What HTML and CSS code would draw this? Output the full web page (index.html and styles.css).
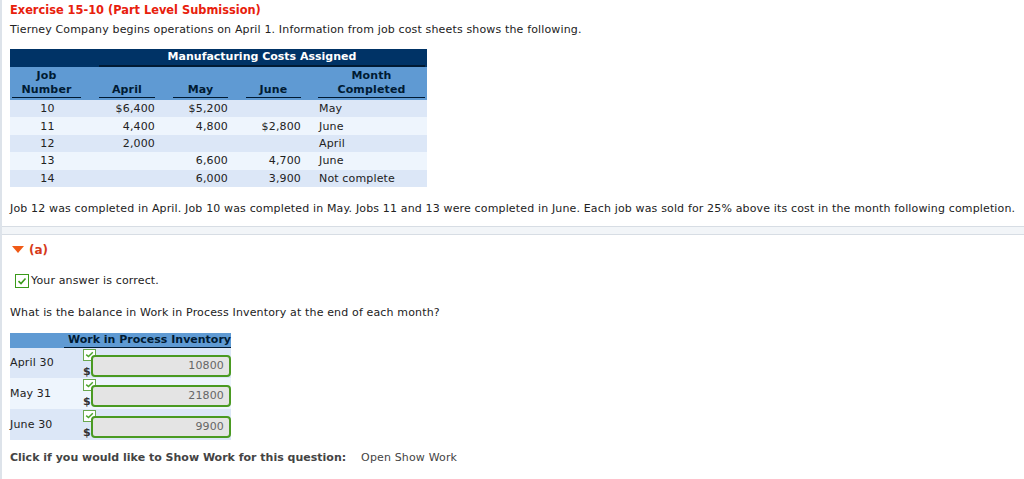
FILE: index.html
```html
<!DOCTYPE html>
<html>
<head>
<meta charset="utf-8">
<link rel="stylesheet" href="styles.css">
</head>
<body>
<div class="page">
  <section class="box top">
    <h1 class="title">Exercise 15-10 (Part Level Submission)</h1>
    <p class="intro">Tierney Company begins operations on April 1. Information from job cost sheets shows the following.</p>
    <table class="costs">
      <colgroup><col class="w-job"><col class="w-num"><col class="w-num2"><col class="w-num2"><col class="w-mon"></colgroup>
      <thead>
        <tr class="hd1">
          <th></th>
          <th colspan="4"><span class="u1">Manufacturing Costs Assigned</span></th>
        </tr>
        <tr class="hd2">
          <th class="c-job"><span class="u">Job<br>Number</span></th>
          <th class="c-num"><span class="u">April</span></th>
          <th class="c-num"><span class="u">May</span></th>
          <th class="c-num"><span class="u">June</span></th>
          <th class="c-mon"><span class="u">Month<br>Completed</span></th>
        </tr>
      </thead>
      <tbody>
        <tr class="odd"><td class="job">10</td><td class="n">$6,400</td><td class="n">$5,200</td><td class="n"></td><td class="m">May</td></tr>
        <tr class="even"><td class="job">11</td><td class="n">4,400</td><td class="n">4,800</td><td class="n">$2,800</td><td class="m">June</td></tr>
        <tr class="odd"><td class="job">12</td><td class="n">2,000</td><td class="n"></td><td class="n"></td><td class="m">April</td></tr>
        <tr class="even"><td class="job">13</td><td class="n"></td><td class="n">6,600</td><td class="n">4,700</td><td class="m">June</td></tr>
        <tr class="odd"><td class="job">14</td><td class="n"></td><td class="n">6,000</td><td class="n">3,900</td><td class="m">Not complete</td></tr>
      </tbody>
    </table>
    <p class="note">Job 12 was completed in April. Job 10 was completed in May. Jobs 11 and 13 were completed in June. Each job was sold for 25% above its cost in the month following completion.</p>
  </section>
  <div class="band"></div>
  <section class="box bottom">
    <div class="part"><span class="tri"></span>(a)</div>
    <div class="correct"><span class="cbox"><svg width="10" height="8" viewBox="0 0 10 8"><path d="M1.5 4.2 L4 6.5 L8.5 1.5" fill="none" stroke="#3a9a1a" stroke-width="1.6"/></svg></span>Your answer is correct.</div>
    <p class="question">What is the balance in Work in Process Inventory at the end of each month?</p>
    <table class="wip">
      <colgroup><col class="w-lbl"><col class="w-val"></colgroup>
      <tr class="whd"><th></th><th><span class="wu">Work in Process Inventory</span></th></tr>
      <tr class="odd r1"><td class="lbl">April 30</td><td class="cell"><div class="inwrap"><span class="mini"><svg width="9" height="7" viewBox="0 0 9 7"><path d="M1.2 3.6 L3.5 5.6 L7.8 1.2" fill="none" stroke="#4aa52a" stroke-width="1.4"/></svg></span><span class="dollar">$</span><span class="inp">10800</span></div></td></tr>
      <tr class="even r2"><td class="lbl">May 31</td><td class="cell"><div class="inwrap"><span class="mini"><svg width="9" height="7" viewBox="0 0 9 7"><path d="M1.2 3.6 L3.5 5.6 L7.8 1.2" fill="none" stroke="#4aa52a" stroke-width="1.4"/></svg></span><span class="dollar">$</span><span class="inp">21800</span></div></td></tr>
      <tr class="odd r2"><td class="lbl">June 30</td><td class="cell"><div class="inwrap"><span class="mini"><svg width="9" height="7" viewBox="0 0 9 7"><path d="M1.2 3.6 L3.5 5.6 L7.8 1.2" fill="none" stroke="#4aa52a" stroke-width="1.4"/></svg></span><span class="dollar">$</span><span class="inp">9900</span></div></td></tr>
    </table>
    <div class="showwork"><span class="sw-b">Click if you would like to Show Work for this question:</span><span class="sw-l">Open Show Work</span></div>
  </section>
</div>
</body>
</html>
```
FILE: styles.css
```css
html, body {
  margin: 0;
  padding: 0;
  background: #fff;
}
body {
  font-family: "DejaVu Sans", Verdana, sans-serif;
  font-size: 11px;
  letter-spacing: 0.15px;
  color: #222;
}
.page {
  border-left: 2px solid #dde3ea;
  min-height: 479px;
}
.box {
  padding: 0 8px;
}
.top {
  padding-top: 3px;
  padding-bottom: 10px;
  border-bottom: 1px solid #d7dde4;
}
.band {
  height: 7px;
  background: #f2f5f8;
}
.bottom {
  border-top: 1px solid #d7dde4;
  padding-top: 8px;
}
.title {
  margin: 0;
  font-size: 11.4px;
  font-weight: bold;
  color: #e8200c;
  line-height: 15px;
  letter-spacing: 0;
}
.intro {
  margin: 5px 0 13px;
  line-height: 13px;
}
.costs {
  border-collapse: collapse;
  width: 417px;
  table-layout: fixed;
  font-size: 11px;
}
.w-job { width: 73px; }
.w-num { width: 74px; }
.w-num2 { width: 73px; }
.w-mon { width: 124px; }
.costs th, .costs td {
  padding: 0;
}
.hd1 th {
  background: #003366;
  color: #fff;
  height: 18px;
  padding: 0 2px 0 0;
  text-align: center;
  letter-spacing: 0;
}
.u1 {
  display: block;
  border-bottom: 2px solid #001a33;
  margin-left: 16px;
  line-height: 16px;
}
.hd2 th {
  background: #5f9ad3;
  color: #001a33;
  vertical-align: bottom;
  height: 29px;
  padding: 2px 2px 2px 0;
  line-height: 14px;
}
.u {
  display: block;
  border-bottom: 1px solid #001a33;
  text-align: center;
}
.c-job .u { margin-left: 2px; }
.c-num .u { margin-left: 16px; }
.c-mon .u { margin-left: 15px; }
.costs tbody td {
  height: 17.4px;
  line-height: 17px;
}
.odd { background: #dce7f7; }
.even { background: #eef5fd; }
.job { text-align: center; padding-left: 2px !important; }
.n { text-align: right; padding-right: 2px !important; }
.m { padding-left: 16px !important; }
.note {
  margin: 15px 0 0;
  line-height: 14px;
  white-space: nowrap;
}
.part {
  display: flex;
  align-items: center;
  color: #d63a1a;
  font-weight: bold;
  font-size: 12px;
  line-height: 14px;
  margin-left: 2px;
  letter-spacing: 0;
}
.tri {
  width: 0;
  height: 0;
  border-left: 6px solid transparent;
  border-right: 6px solid transparent;
  border-top: 7px solid #f05a16;
  margin-right: 5px;
}
.correct {
  display: flex;
  align-items: center;
  margin-top: 17px;
  line-height: 14px;
}
.cbox {
  width: 12px;
  height: 12px;
  border: 1px solid #3a9a1a;
  display: inline-flex;
  align-items: center;
  justify-content: center;
  margin: 0 2px 0 5px;
  background: #fff;
}
.question {
  margin: 18px 0 13px;
  line-height: 14px;
}
.wip {
  border-collapse: collapse;
  table-layout: fixed;
  width: 221px;
}
.w-lbl { width: 54px; }
.w-val { width: 167px; }
.wip td, .wip th { padding: 0; }
.whd th {
  background: #5f9ad3;
  height: 15px;
  text-align: right;
  font-size: 11px;
  font-weight: bold;
  color: #001a33;
  white-space: nowrap;
  letter-spacing: 0;
}
.wu {
  display: block;
  border-bottom: 1px solid #001a33;
  line-height: 14px;
}
.wip tr.r1 td { height: 30px; }
.wip tr.r2 td { height: 31px; }
.lbl {
  vertical-align: middle;
  font-size: 11px;
  white-space: nowrap;
}
.cell { vertical-align: top; }
.inwrap {
  position: relative;
  height: 30px;
}
.mini {
  position: absolute;
  left: 19px;
  top: 1px;
  width: 11px;
  height: 10px;
  border: 1px solid #6aa84f;
  background: #fff;
  display: flex;
  align-items: center;
  justify-content: center;
}
.dollar {
  position: absolute;
  left: 19px;
  top: 17px;
  font-weight: bold;
  font-size: 11px;
  color: #333;
}
.inp {
  position: absolute;
  left: 27px;
  right: 0;
  top: 7px;
  height: 18px;
  border: 2px solid #4a9a22;
  border-radius: 4px;
  background: #e4e4e4;
  color: #666;
  text-align: right;
  line-height: 18px;
  padding-right: 5px;
}
.showwork {
  margin-top: 11px;
  line-height: 14px;
}
.sw-b {
  font-weight: bold;
  color: #444;
  letter-spacing: 0;
}
.sw-l {
  color: #444;
  margin-left: 15px;
}
```
